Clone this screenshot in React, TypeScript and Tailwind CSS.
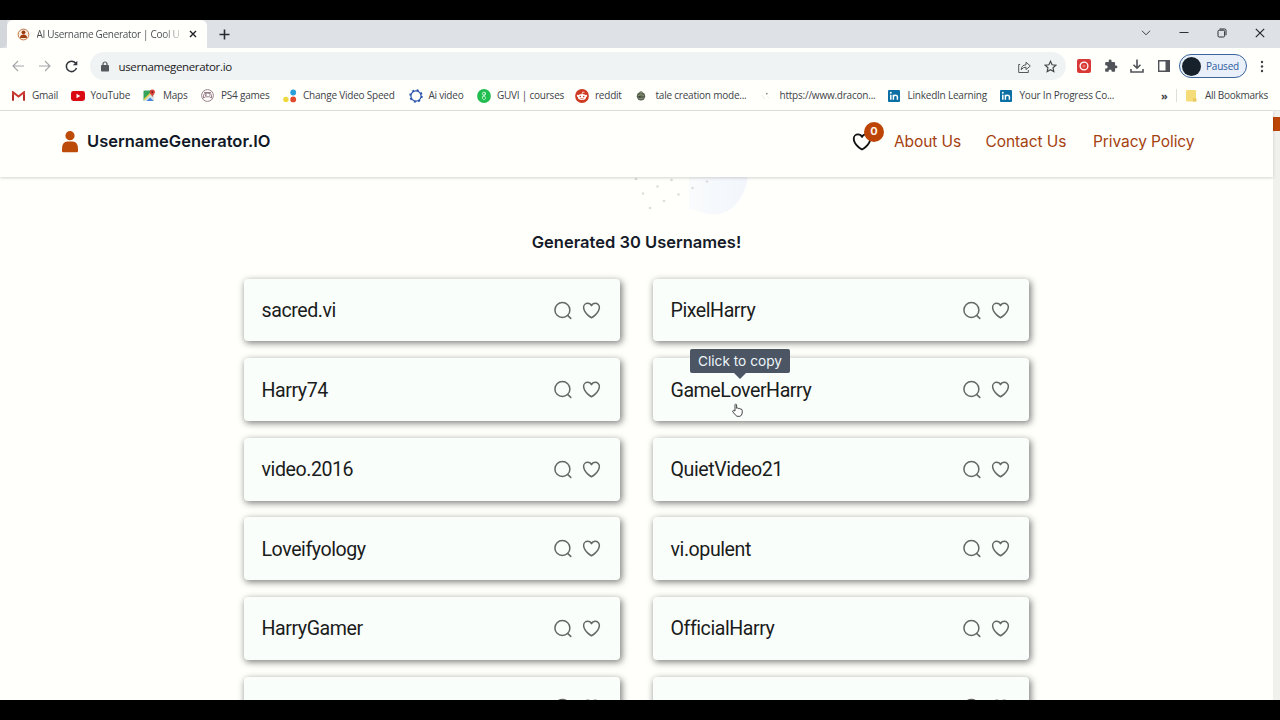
import React from "react";

const names = [
  ["sacred.vi", "PixelHarry"],
  ["Harry74", "GameLoverHarry"],
  ["video.2016", "QuietVideo21"],
  ["Loveifyology", "vi.opulent"],
  ["HarryGamer", "OfficialHarry"],
  ["", ""],
];

function SearchIcon() {
  return (
    <svg className="mt-px h-5 w-5 shrink-0" viewBox="0 0 20 20" fill="none" stroke="#646766" strokeWidth="1.5" strokeLinecap="round">
      <circle cx="9.4" cy="9" r="7.5" />
      <path d="M14.8 14.6 17.8 17.4" />
    </svg>
  );
}

function HeartIcon({ className, stroke, width }: { className: string; stroke: string; width: number }) {
  return (
    <svg className={className} viewBox="0 0 24 24" fill="none" stroke={stroke} strokeWidth={width} strokeLinecap="round" strokeLinejoin="round">
      <path d="M21 8.25c0-2.485-2.099-4.5-4.688-4.5-1.935 0-3.597 1.126-4.312 2.733-.715-1.607-2.377-2.733-4.313-2.733C5.1 3.75 3 5.765 3 8.25c0 7.22 9 12 9 12s9-4.78 9-12Z" />
    </svg>
  );
}

function Card({ name, children }: { name: string; children?: React.ReactNode }) {
  return (
    <div className="relative flex h-[62.7px] w-[376px] items-center rounded-[4px] bg-[#fafefa] pr-[18px] pl-[17.5px] shadow-[1.5px_2px_7px_rgba(0,0,0,0.52)]">
      <span className="flex-1 pt-[1.5px] font-['Roboto',sans-serif] text-[19.6px] tracking-[-0.44px] text-[#1b1c1c]">{name}</span>
      <SearchIcon />
      <HeartIcon className="ml-[8px] h-[21px] w-[21px] shrink-0" stroke="#646766" width={1.7} />
      {children}
    </div>
  );
}

function Bookmark({ icon, label, className }: { icon: React.ReactNode; label: string; className: string }) {
  return (
    <div className={`flex shrink-0 items-center ${className}`}>
      <span className="flex w-[20px] shrink-0 items-center">{icon}</span>
      <span className="whitespace-nowrap">{label}</span>
    </div>
  );
}

function LinkedIn() {
  return (
    <svg width="12" height="12" viewBox="0 0 12 12">
      <rect width="12" height="12" rx="1" fill="#0b6fa4" />
      <circle cx="2.8" cy="2.8" r="1" fill="#fff" />
      <path d="M2.8 4.7v5M5.4 4.7v5M5.4 7c0-2.2 4-2.4 4 0v2.7" stroke="#fff" strokeWidth="1.5" fill="none" />
    </svg>
  );
}

const gmail = (
  <svg width="13" height="10" viewBox="0 0 13 10" fill="none">
    <path d="M1 9.5V1.2L6.5 5.6 12 1.2v8.3" stroke="#c9362d" strokeWidth="1.9" />
    <path d="M1 9.5V4M12 9.5V4" stroke="#b52b27" strokeWidth="1.9" />
  </svg>
);
const youtube = (
  <svg width="14" height="10" viewBox="0 0 14 10">
    <rect width="14" height="10" rx="2.4" fill="#d90a12" />
    <path d="M5.5 2.8v4.4L9.3 5z" fill="#fff" />
  </svg>
);
const maps = (
  <svg width="13" height="13" viewBox="0 0 13 13">
    <rect x="0.5" y="1.5" width="10.5" height="10.5" rx="1" fill="#35a35c" />
    <path d="M1 11.5 9 3.5l2 2v6.5H1z" fill="#dbe3e5" />
    <path d="M3.5 12 7 8.6l3.8 3.4z" fill="#4387df" />
    <path d="M1 10.8 9.7 2.2" stroke="#f3cf43" strokeWidth="1.3" />
    <path d="M9.3 8.2C9 6 6.7 5.4 6.7 3.1a2.6 2.6 0 0 1 5.2 0c0 2.3-2.3 2.9-2.6 5.1z" fill="#d84037" />
    <circle cx="9.3" cy="3.1" r="0.9" fill="#701a17" />
  </svg>
);
const ps4 = (
  <svg width="13" height="13" viewBox="0 0 13 13" fill="none" stroke="#8e7480" strokeWidth="0.9">
    <circle cx="6.5" cy="6.5" r="5.9" />
    <path d="M2.5 9V6.2C2.5 3.6 10.5 3.6 10.5 6.2V9L8.6 7.8H4.4z" />
    <path d="M4.8 5.2v1.8M3.9 6.1h1.8M8 6h1.5M3 3.5h7" />
  </svg>
);
const dots = (
  <svg width="14" height="14" viewBox="0 0 14 14">
    <circle cx="10.2" cy="3.5" r="2.9" fill="#2a9fda" />
    <circle cx="2.9" cy="10.4" r="2.7" fill="#eed83e" />
    <circle cx="10.2" cy="10.4" r="2.9" fill="#e2492b" />
  </svg>
);
const aiVideo = (
  <svg width="14" height="14" viewBox="0 0 14 14" fill="none" stroke="#2551a8">
    <circle cx="7" cy="7" r="5.1" strokeWidth="1.2" />
    <circle cx="7" cy="7" r="5.9" strokeWidth="1.6" strokeDasharray="2 2.633" />
  </svg>
);
const guvi = (
  <svg width="14" height="14" viewBox="0 0 14 14" fill="none">
    <circle cx="7" cy="7" r="6.9" fill="#22bd50" />
    <circle cx="6.9" cy="4.7" r="1.5" stroke="#c9f6d3" strokeWidth="1" />
    <path d="M8.3 3.4v2.3c-2.2.8-3 1.6-2.8 2.6M5.4 8.7c0-2 3.2-2 3.2 0 0 2.4-3.2 2.4-3.2 0" stroke="#c9f6d3" strokeWidth="1" />
  </svg>
);
const reddit = (
  <svg width="14" height="14" viewBox="0 0 14 14">
    <circle cx="7" cy="7" r="6.9" fill="#cf3a22" />
    <circle cx="2.9" cy="6.8" r="1.1" fill="#fff" />
    <circle cx="11.1" cy="6.8" r="1.1" fill="#fff" />
    <ellipse cx="7" cy="8" rx="4.2" ry="2.9" fill="#fff" />
    <circle cx="5.3" cy="7.5" r="0.8" fill="#cf3a22" />
    <circle cx="8.7" cy="7.5" r="0.8" fill="#cf3a22" />
    <path d="M5.4 9.3q1.6.8 3.2 0" stroke="#cf3a22" strokeWidth="0.6" fill="none" />
    <path d="M7 5.3l.6-2.3 1.9.5" stroke="#fff" strokeWidth="0.7" fill="none" />
  </svg>
);
const tale = (
  <svg width="10" height="11" viewBox="0 0 10 11">
    <circle cx="5" cy="6.2" r="4.2" fill="#596050" />
    <path d="M3 2.5Q5-.5 7 2.5L5 4z" fill="#77866a" />
    <path d="M2 5.5q3-1.5 6 0M2.5 8q2.5 1.5 5 0" stroke="#a5ae86" strokeWidth="0.7" fill="none" />
    <circle cx="3.6" cy="6.8" r="0.8" fill="#2d3940" />
  </svg>
);
const faint = (
  <svg width="12" height="12" viewBox="0 0 12 12">
    <circle cx="6.8" cy="3.7" r="0.9" fill="#8e8e8e" />
    <path d="M2 5q1 3 3 4M7.5 6.5 9 8" stroke="#ebebe9" fill="none" />
  </svg>
);

export default function App() {
  return (
    <div className="flex h-[720px] w-[1280px] flex-col overflow-hidden bg-black py-5">
      <div className="flex min-h-0 flex-1 flex-col overflow-hidden bg-[#fffffc] font-['Open_Sans','Noto_Sans',sans-serif]">
        <div className="flex h-7 shrink-0 items-stretch bg-[#dee1e6]">
          <div className="w-[7px] rounded-br-[6px] bg-[#d3d7db]" />
          <div className="flex w-[200px] items-center rounded-t-[6px] bg-[#fffffc] pl-[10px]">
            <svg width="13" height="13" viewBox="0 0 13 13" className="shrink-0">
              <circle cx="6.5" cy="6.5" r="5.4" fill="#f9eadf" stroke="#b9682e" strokeWidth="0.9" />
              <circle cx="6.5" cy="4.3" r="1.9" fill="#9e3c0e" />
              <path d="M3 10q0-3.600 3.500-3.600T10 10z" fill="#9e3c0e" />
            </svg>
            <span className="ml-[6.5px] w-[143px] shrink-0 bg-gradient-to-r from-[#45484c] from-88% to-[#d0d0ce] bg-clip-text text-[10px] tracking-[-0.3px] whitespace-nowrap text-transparent">AI Username Generator | Cool U</span>
            <svg width="8" height="8" viewBox="0 0 8 8" className="ml-[9.5px]" stroke="#1f2022" strokeWidth="1.4">
              <path d="M1 1l6 6M7 1 1 7" />
            </svg>
          </div>
          <div className="flex flex-1 items-center pl-[12px]">
            <svg width="11" height="11" viewBox="0 0 11 11" stroke="#2a2d30" strokeWidth="1.6">
              <path d="M5.5.5v10M.5 5.5h10" />
            </svg>
            <div className="mr-[15px] ml-auto flex items-center pb-[3px]">
              <svg width="10" height="6" viewBox="0 0 10 6" fill="none" stroke="#3a3c3f" strokeWidth="1"><path d="M1 .8l4 4 4-4" /></svg>
              <svg width="10" height="10" viewBox="0 0 10 10" className="ml-[28px]" stroke="#2e3033" strokeWidth="1"><path d="M.5 4.500h9" /></svg>
              <svg width="10" height="10" viewBox="0 0 10 10" className="ml-[28px]" fill="none" stroke="#2e3033" strokeWidth="1"><rect x="1" y="2.2" width="6.6" height="6.8" rx="1.2" /><path d="M2.500 1h5.200q1.300 0 1.300 1.300v5" /></svg>
              <svg width="10" height="10" viewBox="0 0 10 10" className="ml-[28px]" stroke="#202224" strokeWidth="1.1"><path d="M.8.8l8.400 8.400M9.200.8.8 9.200" /></svg>
            </div>
          </div>
        </div>

        <div className="flex h-9 shrink-0 items-center pl-[12px]">
          <svg width="13" height="12" viewBox="0 0 13 12" fill="none" stroke="#a3a5a7" strokeWidth="1.1"><path d="M12 6H1.200M6 1 1 6l5 5" /></svg>
          <svg width="13" height="12" viewBox="0 0 13 12" fill="none" stroke="#a3a5a7" strokeWidth="1.1" className="ml-[13px]"><path d="M1 6h10.800M7 1l5 5-5 5" /></svg>
          <svg width="13" height="13" viewBox="0 0 13 13" fill="none" className="ml-[14px]"><path d="M11.500 8.100A5.200 5.200 0 1 1 10.600 3.100L11.200 3.800" stroke="#33363a" strokeWidth="1.5" /><path d="M12.300.8v4.500H7.800z" fill="#33363a" /></svg>
          <div className="ml-[12px] flex h-7 w-[976px] shrink-0 items-center rounded-full bg-[#f0f3f4] pl-[11px]">
            <svg width="8" height="11" viewBox="0 0 8 11" className="mt-px"><rect y="4" width="8" height="6.5" rx="0.8" fill="#56595c" /><path d="M2 4.500V3a2 2 0 0 1 4 0v1.500" fill="none" stroke="#56595c" strokeWidth="1.2" /></svg>
            <span className="ml-[9.5px] pt-px text-[11.5px] tracking-[-0.34px] text-[#202124]">usernamegenerator.io</span>
            <svg width="13" height="12" viewBox="0 0 13 12" fill="none" stroke="#56595c" strokeWidth="1" strokeLinejoin="round" className="mt-px ml-auto"><path d="M2.200 3.500H.7v8h9.600V9M3.200 8.800Q3.500 4 8 3.800V1.200L12.300 5 8 8.600V6.200Q5 6 3.200 8.800z" /></svg>
            <svg width="13" height="13" viewBox="0 0 24 24" fill="none" stroke="#45484b" strokeWidth="2.2" className="mr-[9px] ml-[13px]"><path d="m12 2.500 2.900 6.400 7 .8-5.200 4.700 1.400 6.900-6.100-3.500-6.100 3.500 1.400-6.900L2.100 9.700l7-.8z" /></svg>
          </div>
          <svg width="14" height="14" viewBox="0 0 14 14" className="ml-[11px]" fill="none"><rect width="14" height="14" rx="2" fill="#d93936" /><circle cx="7" cy="7" r="3.9" stroke="#fff" strokeWidth="1.3" /><circle cx="7" cy="7" r="1.6" fill="#e8736d" /></svg>
          <svg width="14" height="14" viewBox="0 0 24 24" fill="#505357" className="ml-[13px]"><path d="M20.500 11H19V7a2 2 0 0 0-2-2h-4V3.500a2.500 2.500 0 0 0-5 0V5H4a2 2 0 0 0-2 2v3.800h1.500a2.700 2.700 0 0 1 0 5.400H2V20a2 2 0 0 0 2 2h3.800v-1.500a2.700 2.700 0 0 1 5.400 0V22H17a2 2 0 0 0 2-2v-4h1.500a2.500 2.500 0 0 0 0-5z" /></svg>
          <svg width="14" height="14" viewBox="0 0 14 14" fill="none" stroke="#505357" strokeWidth="1.6" className="ml-[12px]"><path d="M7 .5v8.500M3.500 5.700 7 9.200l3.500-3.500M1 10v3h12v-3" /></svg>
          <svg width="12" height="12" viewBox="0 0 12 12" className="ml-[14px]"><path d="M.7.7h10.600v10.600H.7z" fill="none" stroke="#505357" strokeWidth="1.4" /><path d="M7.500.7h3.800v10.600H7.500z" fill="#505357" /></svg>
          <div className="ml-[9px] flex h-6 w-[68px] shrink-0 items-center rounded-full border border-[#3a659c] bg-[#e9f0f9] pl-[2px]">
            <div className="h-[19px] w-[19px] rounded-full bg-[#16212b]" />
            <span className="ml-[5px] text-[10px] tracking-[-0.2px] text-[#2d5b9f]">Paused</span>
          </div>
          <svg width="4" height="13" viewBox="0 0 4 13" fill="#3f4245" className="ml-[13px]"><circle cx="2" cy="2" r="1.2" /><circle cx="2" cy="6.5" r="1.2" /><circle cx="2" cy="11" r="1.2" /></svg>
        </div>

        <div className="flex h-[27px] shrink-0 items-center border-b border-[#e2e4e3] pb-[3px] pl-[12px] text-[10px] tracking-[-0.22px] text-[#404347]">
          <Bookmark icon={gmail} label="Gmail" className="w-[58.5px]" />
          <Bookmark icon={youtube} label="YouTube" className="w-[72.5px]" />
          <Bookmark icon={maps} label="Maps" className="w-[58px]" />
          <Bookmark icon={ps4} label="PS4 games" className="w-[82px]" />
          <Bookmark icon={dots} label="Change Video Speed" className="w-[125.5px]" />
          <Bookmark icon={aiVideo} label="Ai video" className="w-[68.5px]" />
          <Bookmark icon={guvi} label="GUVI | courses" className="w-[98px]" />
          <Bookmark icon={reddit} label="reddit" className="w-[61.5px]" />
          <Bookmark icon={tale} label="tale creation mode..." className="-ml-px w-[124px]" />
          <Bookmark icon={faint} label="https://www.dracon..." className="w-[128px]" />
          <Bookmark icon={<LinkedIn />} label="LinkedIn Learning" className="w-[112px]" />
          <Bookmark icon={<LinkedIn />} label="Your In Progress Co..." className="w-[161.5px]" />
          <span className="w-[15px] shrink-0 pb-px text-[11px] leading-none font-bold">»</span>
          <div className="h-[13px] w-px shrink-0 bg-[#dedfdd]" />
          <svg width="11" height="12" viewBox="0 0 11 12" className="mr-[8px] ml-[9px] shrink-0"><rect width="10" height="11.5" rx="1" fill="#f6db79" /><path d="M7 8.500h3.500v3H7z" fill="#eac75b" /></svg>
          <span className="tracking-[-0.28px] whitespace-nowrap">All Bookmarks</span>
        </div>

        <div className="flex min-h-0 flex-1">
          <div className="flex w-[1273px] shrink-0 flex-col">
            <header className="z-10 flex h-[66px] shrink-0 items-center bg-[#fffffc] pb-[5px] pl-[61px] shadow-[0_1px_3px_rgba(0,0,0,0.18)]">
              <svg width="18" height="22" viewBox="0 0 18 22" fill="#bc4b09"><circle cx="9" cy="4.7" r="4.6" /><path d="M1 18.300Q1 10.600 6.500 10.600h5Q17 10.600 17 18.300V20q0 1.300-1.300 1.300H2.300Q1 21.300 1 20z" /></svg>
              <span className="ml-[8px] font-['Inter',sans-serif] text-[16.5px] font-semibold text-[#111827]">UsernameGenerator.IO</span>
              <nav className="ml-auto flex items-center pr-[78px] font-['Inter',sans-serif] text-[15.5px] tracking-[-0.08px] text-[#a5410f]">
                <span className="relative mr-[21px] flex">
                  <HeartIcon className="h-[22px] w-[22px]" stroke="#111" width={2} />
                  <span className="absolute top-[-9px] left-[13px] flex h-5 w-5 items-center justify-center rounded-full bg-[#bc4506] text-[11px] font-bold text-[#fff3e8]">0</span>
                </span>
                <span className="w-[91.5px] whitespace-nowrap">About Us</span>
                <span className="w-[107.5px] whitespace-nowrap">Contact Us</span>
                <span className="w-[102px] whitespace-nowrap">Privacy Policy</span>
              </nav>
            </header>
            <main className="flex min-h-0 flex-1 flex-col items-center overflow-hidden">
              <svg className="h-[40px] w-[240px] shrink-0" viewBox="516 178 240 40">
                <defs>
                  <linearGradient id="blob" x1="0" x2="1"><stop offset="0" stopColor="#f9fbfc" /><stop offset="1" stopColor="#f2f6fc" /></linearGradient>
                </defs>
                <path d="M688 178h58.500c-1 18-14 35-29 37-11 2-20-4-29.500-5z" fill="url(#blob)" />
                <g fill="#dcddda">
                  <circle cx="635" cy="180" r="1.3" /><circle cx="670.5" cy="181" r="1.3" /><circle cx="656.5" cy="187.5" r="1.3" /><circle cx="642" cy="194.5" r="1.3" />
                  <circle cx="677.5" cy="195.5" r="1.3" /><circle cx="663" cy="202" r="1.3" /><circle cx="649" cy="209" r="1.3" /><circle cx="691.5" cy="189" r="1.3" /><circle cx="706" cy="182.5" r="1.3" />
                </g>
              </svg>
              <h2 className="mt-[12.5px] h-6 font-['Inter',sans-serif] text-[16.5px] leading-6 font-semibold whitespace-nowrap text-[#151b28]">Generated 30 Usernames!</h2>
              <div className="mt-[25.2px] grid grid-cols-[376px_376px] gap-x-[33px] gap-y-[16.9px]">
                {names.flat().map((name, i) => (
                  <Card key={i} name={name}>
                    {name === "GameLoverHarry" && (
                      <>
                        <div className="absolute top-[-9px] left-[37px] flex h-[24px] w-[100px] items-center justify-center rounded-[2px] bg-[#4b5563] font-['Inter',sans-serif] text-[13.7px] whitespace-nowrap text-[#eef5fb]">
                          Click to copy
                          <div className="absolute top-[24px] left-[44px] border-x-[6px] border-t-[6px] border-x-transparent border-t-[#4b5563]" />
                        </div>
                        <svg className="absolute top-[45px] left-[79px]" width="11" height="14" viewBox="0 0 11 14" fill="#fff" stroke="#303236" strokeWidth="0.9" strokeLinejoin="round">
                          <path d="M3 8V1.700Q3.700.2 4.600 1.700V5.300Q5.500 4.500 6.200 5.500 7.300 4.900 8 6 9.800 5.500 10.200 7.200V10Q9.800 13 7.800 13.300H5Q3.500 12.500.8 8.800.5 7.500 1.600 7.300z" />
                        </svg>
                      </>
                    )}
                  </Card>
                ))}
              </div>
            </main>
          </div>
          <div className="flex-1 bg-[#f0f0ed] pt-[6px]"><div className="h-[14px] bg-[#bc4506]" /></div>
        </div>
      </div>
    </div>
  );
}
